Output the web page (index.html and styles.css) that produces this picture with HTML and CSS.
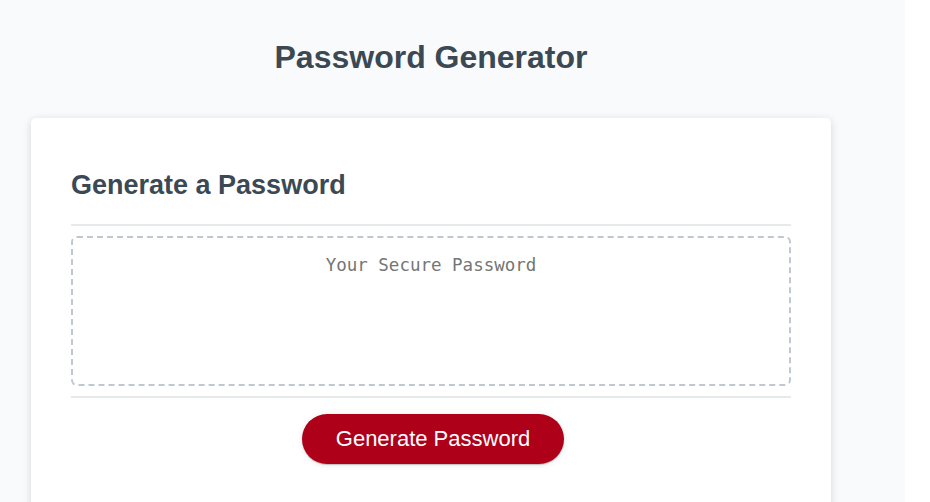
FILE: index.html
```html
<!DOCTYPE html>
<html lang="en">
<head>
<meta charset="utf-8">
<title>Password Generator</title>
<link rel="stylesheet" href="styles.css">
</head>
<body>
<div class="page">
  <div class="wrapper">
    <header class="header">
      <h1>Password Generator</h1>
    </header>
    <div class="card">
      <div class="card-header">
        <h2>Generate a Password</h2>
      </div>
      <div class="card-body">
        <textarea readonly class="password" placeholder="Your Secure Password" aria-label="Generated Password"></textarea>
      </div>
      <div class="card-footer">
        <button class="btn" type="button">Generate Password</button>
      </div>
    </div>
  </div>
</div>
</body>
</html>
```

FILE: styles.css
```css
html {
  background: #ffffff;
}

body {
  margin: 0;
  font-family: "Liberation Sans", Arial, sans-serif;
}

.page {
  width: 905px;
  height: 502px;
  overflow: hidden;
  background: #f9fafc;
  box-sizing: border-box;
  padding: 39px 0 0 31px;
}

.wrapper {
  width: 800px;
  display: flex;
  flex-direction: column;
}

.header {
  text-align: center;
  color: hsl(206, 17%, 28%);
}

.header h1 {
  margin: 0 0 42px;
  font-size: 32px;
  font-weight: bold;
  line-height: 37px;
}

.card {
  background: #ffffff;
  border-radius: 5px;
  box-shadow: rgba(0, 0, 0, 0.15) 0 2px 8px 0;
  color: hsl(206, 17%, 28%);
  font-size: 18px;
  padding: 30px 40px;
  display: flex;
  flex-direction: column;
}

.card-header h2 {
  margin: 0;
  padding: 22px 0 23px;
  font-size: 27px;
  line-height: 31px;
  font-weight: bold;
}

.card-header::after,
.card-footer::before {
  content: "";
  display: block;
  align-self: stretch;
  height: 2px;
  background: #e7e9eb;
}

.card-body {
  padding: 10px 0;
  display: flex;
}

.password {
  flex: 1;
  height: 150px;
  box-sizing: border-box;
  border: 2px dashed #c0c7cf;
  border-radius: 6px;
  padding: 17px 20px;
  resize: none;
  overflow: hidden;
  font-family: "DejaVu Sans Mono", monospace;
  font-size: 17.5px;
  text-align: center;
  color: #3b4751;
  background: #ffffff;
  outline: none;
}

.password::placeholder {
  color: #757575;
}

.card-footer {
  display: flex;
  flex-direction: column;
  align-items: center;
}

.btn {
  margin: 16px 16px 16px 20px;
  border: none;
  background: #af0019;
  color: #ffffff;
  border-radius: 25px;
  font-family: "Liberation Sans", Arial, sans-serif;
  font-size: 22px;
  line-height: 22px;
  padding: 14px 34px;
  box-shadow: rgba(0, 0, 0, 0.1) 0 1px 6px 0, rgba(0, 0, 0, 0.2) 0 1px 1px 0;
  cursor: pointer;
}
```
